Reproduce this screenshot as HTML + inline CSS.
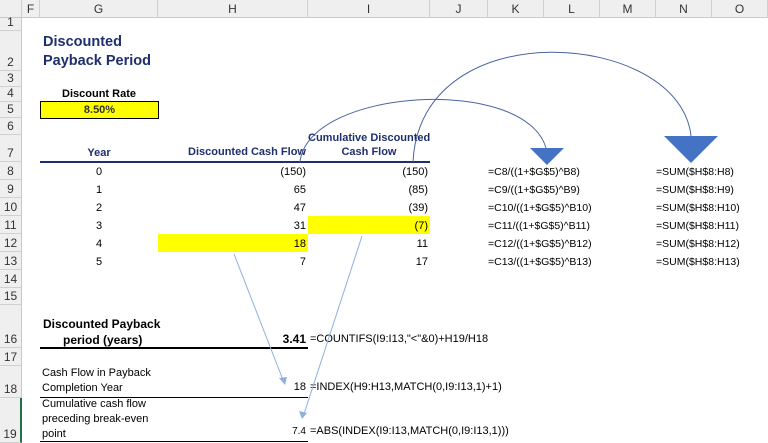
<!DOCTYPE html>
<html><head><meta charset="utf-8"><style>
*{margin:0;padding:0;box-sizing:border-box}
body{width:768px;height:443px;overflow:hidden;background:#fff;font-family:"Liberation Sans",Arial,sans-serif;font-size:11px;color:#000;position:relative}
.a{position:absolute;white-space:nowrap}
.hdr{position:absolute;top:0;height:18px;background:#efefef;border-right:1px solid #d0d0d0;border-bottom:1px solid #c8c8c8;text-align:center;line-height:18px;font-size:12px;color:#333}
.rh{position:absolute;left:0;width:22px;background:#efefef;border-bottom:1px solid #d0d0d0;border-right:1px solid #c8c8c8;font-size:12px;color:#333;display:flex;align-items:flex-end;justify-content:center;padding-bottom:1px}
.r{text-align:right}
.b{font-weight:bold}
.n{color:#1f2f6e}
</style></head><body>
<div class="hdr" style="left:0;width:22px"></div>
<div class="hdr" style="left:22px;width:18px">F</div>
<div class="hdr" style="left:40px;width:118px">G</div>
<div class="hdr" style="left:158px;width:150px">H</div>
<div class="hdr" style="left:308px;width:122px">I</div>
<div class="hdr" style="left:430px;width:58px">J</div>
<div class="hdr" style="left:488px;width:56px">K</div>
<div class="hdr" style="left:544px;width:56px">L</div>
<div class="hdr" style="left:600px;width:56px">M</div>
<div class="hdr" style="left:656px;width:56px">N</div>
<div class="hdr" style="left:712px;width:56px">O</div>

<div class="rh" style="top:18px;height:13px">1</div>
<div class="rh" style="top:31px;height:40px">2</div>
<div class="rh" style="top:71px;height:16px">3</div>
<div class="rh" style="top:87px;height:15px">4</div>
<div class="rh" style="top:102px;height:16px">5</div>
<div class="rh" style="top:118px;height:17px">6</div>
<div class="rh" style="top:135px;height:27px">7</div>
<div class="rh" style="top:162px;height:18px">8</div>
<div class="rh" style="top:180px;height:18px">9</div>
<div class="rh" style="top:198px;height:18px">10</div>
<div class="rh" style="top:216px;height:18px">11</div>
<div class="rh" style="top:234px;height:18px">12</div>
<div class="rh" style="top:252px;height:18px">13</div>
<div class="rh" style="top:270px;height:18px">14</div>
<div class="rh" style="top:288px;height:17px">15</div>
<div class="rh" style="top:305px;height:43px">16</div>
<div class="rh" style="top:348px;height:18px">17</div>
<div class="rh" style="top:366px;height:32px">18</div>
<div class="rh" style="top:398px;height:45px;border-right:2px solid #217346">19</div>

<div class="a b n" style="left:43px;top:33px;font-size:14.5px;line-height:19px">Discounted<br>Payback Period</div>
<div class="a b" style="left:40px;top:88px;width:118px;text-align:center">Discount Rate</div>
<div class="a b" style="left:40px;top:101px;width:119px;height:18px;background:#ffff00;border:1px solid #000;text-align:center;line-height:16px;color:#333">8.50%</div>

<div class="a b n" style="left:40px;top:147px;width:118px;text-align:center">Year</div>
<div class="a b n" style="left:158px;top:146px;width:148px;text-align:right">Discounted Cash Flow</div>
<div class="a b n" style="left:308px;top:131px;width:122px;text-align:center;line-height:14px">Cumulative Discounted<br>Cash Flow</div>
<div class="a" style="left:40px;top:161px;width:390px;height:2px;background:#1f2f6e"></div>

<div class="a" style="left:158px;top:234px;width:150px;height:18px;background:#ffff00"></div>
<div class="a" style="left:308px;top:216px;width:122px;height:18px;background:#ffff00"></div>

<div class="a" style="left:40px;top:163px;width:118px;text-align:center;line-height:18px">0<br>1<br>2<br>3<br>4<br>5</div>
<div class="a r" style="left:158px;top:163px;width:148px;line-height:18px">(150)<br>65<br>47<br>31<br>18<br>7</div>
<div class="a r" style="left:308px;top:163px;width:120px;line-height:18px">(150)<br>(85)<br>(39)<br>(7)<br>11<br>17</div>
<div class="a" style="left:488px;top:163px;line-height:18px;font-size:10.5px">=C8/((1+$G$5)^B8)<br>=C9/((1+$G$5)^B9)<br>=C10/((1+$G$5)^B10)<br>=C11/((1+$G$5)^B11)<br>=C12/((1+$G$5)^B12)<br>=C13/((1+$G$5)^B13)</div>
<div class="a" style="left:656px;top:163px;line-height:18px;font-size:10.5px">=SUM($H$8:H8)<br>=SUM($H$8:H9)<br>=SUM($H$8:H10)<br>=SUM($H$8:H11)<br>=SUM($H$8:H12)<br>=SUM($H$8:H13)</div>

<div class="a b" style="left:43px;top:316px;line-height:16px;font-size:12px">Discounted Payback<br>&nbsp;&nbsp;&nbsp;&nbsp;&nbsp;&nbsp;period (years)</div>
<div class="a b r" style="left:158px;top:332px;width:148px;font-size:12px">3.41</div>
<div class="a" style="left:40px;top:347px;width:268px;height:2px;background:#000"></div>
<div class="a" style="left:310px;top:333px;font-size:11px">=COUNTIFS(I9:I13,"&lt;"&amp;0)+H19/H18</div>

<div class="a" style="left:42px;top:366px;line-height:15px">Cash Flow in Payback<br>Completion Year</div>
<div class="a r" style="left:158px;top:381px;width:148px">18</div>
<div class="a" style="left:310px;top:381px">=INDEX(H9:H13,MATCH(0,I9:I13,1)+1)</div>
<div class="a" style="left:40px;top:397px;width:268px;height:1px;background:#000"></div>
<div class="a" style="left:42px;top:397px;line-height:15px">Cumulative cash flow<br>preceding break-even<br>point</div>
<div class="a r" style="left:158px;top:426px;width:148px;font-size:10px">7.4</div>
<div class="a" style="left:310px;top:425px">=ABS(INDEX(I9:I13,MATCH(0,I9:I13,1)))</div>
<div class="a" style="left:40px;top:441px;width:268px;height:1px;background:#000"></div>

<svg class="a" style="left:0;top:0" width="768" height="443">
<path d="M300,162 C308,88 525,75 546,148" fill="none" stroke="#4a64a0" stroke-width="1"/>
<polygon points="530,148 564,148 547,165" fill="#4472c4"/>
<path d="M413,162 C420,10 680,30 691,136" fill="none" stroke="#4a64a0" stroke-width="1"/>
<polygon points="664,136 718,136 691,163" fill="#4472c4"/>
<path d="M234,254 L283,380" stroke="#8fb0dc" stroke-width="1"/>
<polygon points="279,378 287,377 285,385" fill="#8fb0dc"/>
<path d="M362,236 L304,414" stroke="#8fb0dc" stroke-width="1"/>
<polygon points="299,411 307,413 302,419" fill="#8fb0dc"/>
</svg>
</body></html>
